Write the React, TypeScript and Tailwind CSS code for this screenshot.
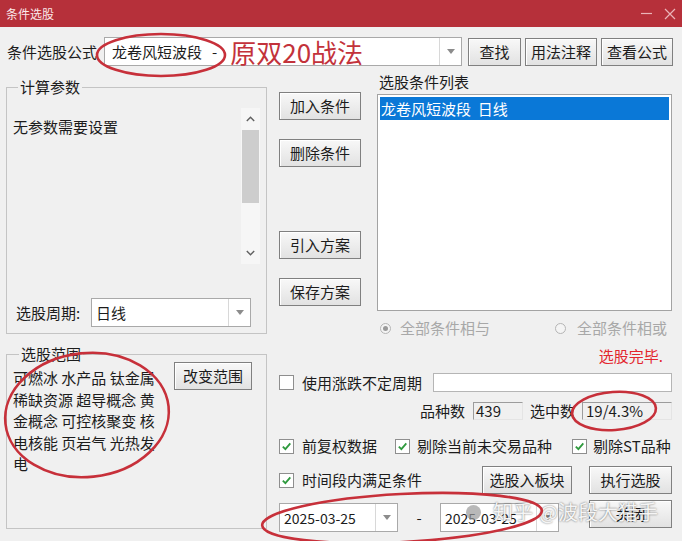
import React from "react";

const Btn = ({ children, className = "" }: { children: React.ReactNode; className?: string }) => (
  <div
    className={`flex items-center justify-center border border-[#808080] bg-linear-to-b from-[#f8f8f8] to-[#e2e2e2] shadow-[inset_1px_1px_0_#ffffff] text-[15px] leading-[16px] text-[#1c1c1c] shrink-0 ${className}`}
  >
    {children}
  </div>
);

const Arrow = () => (
  <div className="w-[22px] h-full border-l border-[#d8d8d8] flex items-center justify-center shrink-0">
    <svg width="8" height="5" viewBox="0 0 8 5">
      <path d="M0 0h8L4 5z" fill="#8c8c8c" />
    </svg>
  </div>
);

const Check = ({ checked }: { checked?: boolean }) => (
  <div className="w-[15px] h-[15px] border border-[#8e8e8e] bg-white flex items-center justify-center shrink-0">
    {checked && (
      <svg width="11" height="11" viewBox="0 0 11 11">
        <path d="M1.8 5.6 L4.4 8.2 L9.3 2.4" stroke="#2f9a3e" strokeWidth="1.8" fill="none" />
      </svg>
    )}
  </div>
);

const Radio = ({ on }: { on?: boolean }) => (
  <div className="w-[11px] h-[11px] rounded-full border border-[#b5b5b5] bg-[#f4f4f4] flex items-center justify-center shrink-0">
    {on && <div className="w-[5px] h-[5px] rounded-full bg-[#9a9a9a]" />}
  </div>
);

export default function App() {
  return (
    <div className="relative w-[682px] h-[541px] overflow-hidden bg-[#f0f0f0] text-[15px] leading-[16px] text-[#1c1c1c] font-['Noto_Sans_CJK_SC','Noto_Sans',sans-serif]">
      {/* title bar */}
      <div className="h-[27px] bg-[#b6303a] flex items-center pl-[6px] pr-[6px]">
        <span className="text-[12px] leading-[14px] text-[#fbeaea]">条件选股</span>
        <div className="ml-auto flex items-center gap-[12px] text-[#eab4b8]">
          <svg width="11" height="11" viewBox="0 0 11 11">
            <path d="M0 5.5h11" stroke="#eab4b8" strokeWidth="1.2" />
          </svg>
          <svg width="12" height="12" viewBox="0 0 12 12">
            <path d="M1 1L11 11M11 1L1 11" stroke="#eab4b8" strokeWidth="1.2" />
          </svg>
        </div>
      </div>

      {/* formula row */}
      <div className="flex items-center h-[29px] mt-[10px] pl-[7px]">
        <span className="w-[97px] shrink-0">条件选股公式</span>
        <div className="w-[358px] h-full border border-[#a9a9a9] bg-white flex items-center">
          <div className="flex-1 flex items-center pl-[7px]">
            <span>龙卷风短波段</span>
            <span className="ml-[10px]">-</span>
            <span className="ml-[13px] text-[26px] leading-[28px] text-[#c3323b]">原双20战法</span>
          </div>
          <Arrow />
        </div>
        <Btn className="ml-[6px] w-[53px] h-[28px]">查找</Btn>
        <Btn className="ml-[4px] w-[72px] h-[28px]">用法注释</Btn>
        <Btn className="ml-[4px] w-[72px] h-[28px]">查看公式</Btn>
      </div>

      {/* main */}
      <div className="flex mt-[8px] pl-[6px]">
        {/* left column */}
        <div className="w-[261px] shrink-0 flex flex-col">
          <fieldset className="mt-[5px] h-[255px] border border-[#c4c4c4] px-[6px]">
            <legend className="ml-[5px] px-[2px] leading-[16px]">计算参数</legend>
            <div className="mt-[13px] flex h-[156px]">
              <div className="flex-1 pt-[11px]">无参数需要设置</div>
              <div className="w-[19px] h-full bg-[#f6f6f6] flex flex-col items-center">
                <div className="h-[22px] flex items-center justify-center">
                  <svg width="9" height="6" viewBox="0 0 9 6">
                    <path d="M0.8 5L4.5 1.2L8.2 5" stroke="#606060" strokeWidth="1.4" fill="none" />
                  </svg>
                </div>
                <div className="w-[17px] h-[73px] bg-[#cdcdcd]" />
                <div className="flex-1" />
                <div className="h-[22px] flex items-center justify-center">
                  <svg width="9" height="6" viewBox="0 0 9 6">
                    <path d="M0.8 1L4.5 4.8L8.2 1" stroke="#606060" strokeWidth="1.4" fill="none" />
                  </svg>
                </div>
              </div>
            </div>
            <div className="mt-[34px] flex items-center h-[29px] pl-[3px]">
              <span className="w-[75px] shrink-0">选股周期:</span>
              <div className="w-[160px] h-full border border-[#a9a9a9] bg-white flex items-center">
                <span className="flex-1 pl-[4px]">日线</span>
                <Arrow />
              </div>
            </div>
          </fieldset>

          <fieldset className="mt-[12px] h-[183px] border border-[#c4c4c4] px-[6px]">
            <legend className="ml-[6px] px-[2px] leading-[16px]">选股范围</legend>
            <div className="flex">
              <div className="w-[150px] pt-[5px] leading-[21.5px]">
                <div>可燃冰 水产品 钛金属</div>
                <div>稀缺资源 超导概念 黄</div>
                <div>金概念 可控核聚变 核</div>
                <div>电核能 页岩气 光热发</div>
                <div>电</div>
              </div>
              <Btn className="ml-[11px] w-[78px] h-[28px]">改变范围</Btn>
            </div>
          </fieldset>
        </div>

        {/* right section */}
        <div className="ml-[12px] w-[393px] flex flex-col">
          <div className="flex">
            <div className="w-[82px] flex flex-col">
              <Btn className="mt-[18px] w-[82px] h-[28px]">加入条件</Btn>
              <Btn className="mt-[19px] w-[82px] h-[28px]">删除条件</Btn>
              <Btn className="mt-[64px] w-[82px] h-[28px]">引入方案</Btn>
              <Btn className="mt-[19px] w-[82px] h-[28px]">保存方案</Btn>
            </div>
            <div className="ml-[16px] w-[295px] flex flex-col">
              <div className="h-[16px] pl-[2px]">选股条件列表</div>
              <div className="mt-[4px] h-[217px] border border-[#a3a3a3] bg-white p-[2px]">
                <div className="h-[23px] bg-[#0a78d7] text-white flex items-center pl-[1px]">
                  龙卷风短波段&nbsp;&nbsp;日线
                </div>
              </div>
              <div className="mt-[9px] h-[16px] flex items-center text-[#a8a8a8]">
                <div className="ml-[3px]">
                  <Radio on />
                </div>
                <span className="ml-[9px]">全部条件相与</span>
                <div className="ml-[65px]">
                  <Radio />
                </div>
                <span className="ml-[11px]">全部条件相或</span>
              </div>
              <div className="mt-[12px] h-[16px] text-right pr-[9px] text-[#e3262e]">选股完毕.</div>
            </div>
          </div>

          {/* bottom rows */}
          <div className="mt-[9px] h-[19px] flex items-center">
            <Check />
            <span className="ml-[8px] w-[120px] shrink-0">使用涨跌不定周期</span>
            <div className="ml-[11px] flex-1 h-full border border-[#b5b5b5] bg-white" />
          </div>

          <div className="mt-[10px] h-[18px] flex items-center pl-[141px]">
            <span className="w-[47px] shrink-0">品种数</span>
            <div className="ml-[6px] w-[50px] h-full border-l border-t border-[#9c9c9c] border-r-[#e4e4e4] border-b-[#e4e4e4] border-r border-b flex items-center pl-[2px]">
              439
            </div>
            <span className="ml-[7px] w-[45px] shrink-0">选中数</span>
            <div className="ml-[7px] flex-1 h-full border-l border-t border-[#9c9c9c] border-r-[#e4e4e4] border-b-[#e4e4e4] border-r border-b flex items-center pl-[3px]">
              19/4.3%
            </div>
          </div>

          <div className="mt-[18px] h-[16px] flex items-center">
            <Check checked />
            <span className="ml-[8px]">前复权数据</span>
            <div className="ml-[18px]">
              <Check checked />
            </div>
            <span className="ml-[7px]">剔除当前未交易品种</span>
            <div className="ml-[20px]">
              <Check checked />
            </div>
            <span className="ml-[6px]">剔除ST品种</span>
          </div>

          <div className="mt-[12px] h-[28px] flex items-center">
            <Check checked />
            <span className="ml-[8px] w-[120px] shrink-0">时间段内满足条件</span>
            <Btn className="ml-[60px] w-[90px] h-[28px]">选股入板块</Btn>
            <Btn className="ml-[17px] w-[83px] h-[28px]">执行选股</Btn>
          </div>

          <div className="mt-[6px] h-[32px] flex items-start">
            <div className="mt-[3px] w-[119px] h-[29px] border border-[#a9a9a9] bg-white flex items-center">
              <span className="flex-1 pl-[4px] text-[14px]">2025-03-25</span>
              <Arrow />
            </div>
            <div className="mt-[3px] h-[29px] w-[42px] flex items-center justify-center">-</div>
            <div className="mt-[3px] w-[119px] h-[29px] border border-[#a9a9a9] bg-white flex items-center">
              <span className="flex-1 pl-[4px] text-[14px]">2025-03-25</span>
              <Arrow />
            </div>
            <Btn className="ml-auto w-[83px] h-[28px]">关闭</Btn>
          </div>
        </div>
      </div>

      {/* watermark */}
      <div className="absolute left-[466px] top-[500px] flex items-center text-[20px] leading-[24px] text-[#f5f5f5] [text-shadow:0_0_2px_rgba(0,0,0,0.6)]">
        <div className="w-[15px] h-[15px] rounded-full bg-[#9a9a9a] opacity-70 mr-[12px]" />
        <span>知乎</span>
        <span className="ml-[6px]">@波段大猎手</span>
      </div>

      {/* red annotation ellipses */}
      <svg className="absolute inset-0 pointer-events-none" width="682" height="541" viewBox="0 0 682 541">
        <g fill="none" stroke="#c7303a" strokeWidth="2.6">
          <ellipse cx="161" cy="55" rx="64" ry="21" />
          <ellipse cx="87" cy="415" rx="82" ry="62" transform="rotate(-6 87 415)" />
          <ellipse cx="614" cy="411" rx="42" ry="19" transform="rotate(-4 614 411)" />
          <ellipse cx="402" cy="518" rx="140" ry="24" transform="rotate(-3 402 518)" />
        </g>
      </svg>
    </div>
  );
}
